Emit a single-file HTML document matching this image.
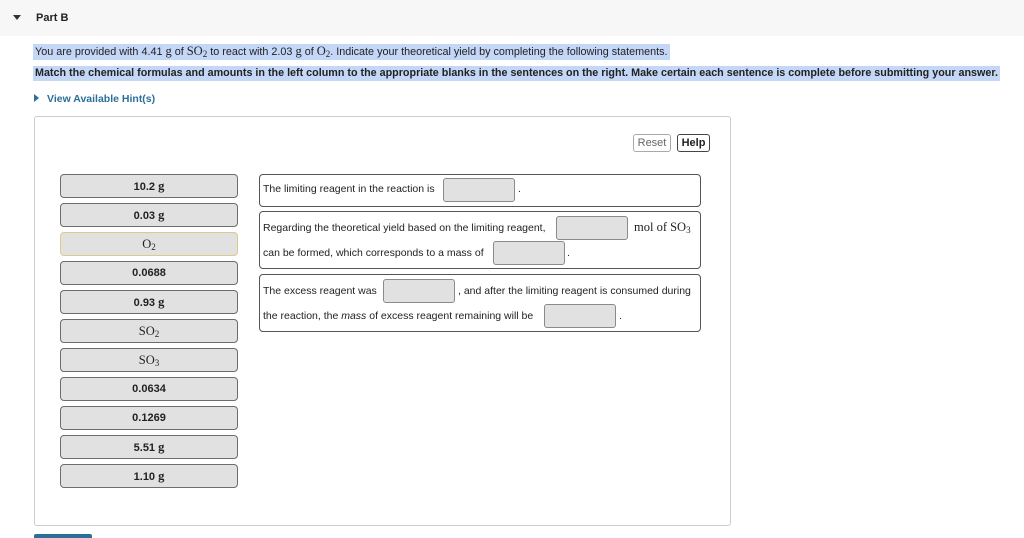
<!DOCTYPE html>
<html><head><meta charset="utf-8"><style>
body{margin:0;width:1024px;height:537px;overflow:hidden;background:#fff;font-family:"Liberation Sans",Arial,sans-serif;color:#222;position:relative}
.a{position:absolute}
.m{font-family:"Liberation Serif",serif;font-size:12.5px}
.hl{background:#c4d7f7}
.it{position:absolute;left:60px;width:176px;height:22px;border:1px solid #6d6d6d;border-radius:4px;background:#e1e1e1;font-size:11px;font-weight:bold;text-align:center;line-height:22px}
.bx{position:absolute;left:259px;width:440px;border:1.5px solid #555;border-radius:4px;background:#fff;font-size:10.5px}
.bl{position:absolute;width:70px;height:22px;border:1px solid #8a8a8a;border-radius:3px;background:#e1e1e1}
.t{position:absolute;white-space:nowrap;font-size:10.5px}
sub{font-size:9px;vertical-align:-2px;line-height:0}
</style></head><body>
<div class="a" style="left:0;top:0;width:1024px;height:36px;background:#f7f7f7"></div>
<div class="a" style="left:13px;top:15px;width:0;height:0;border-left:4px solid transparent;border-right:4px solid transparent;border-top:5px solid #333"></div>
<div class="a" style="left:36px;top:12px;font-size:11px;font-weight:bold">Part B</div>
<div class="a hl" style="left:33px;top:44px;font-size:10.8px;line-height:15px;padding:0 2px;white-space:nowrap">You are provided with 4.41 <span class="m">g</span> of <span class="m">SO<sub>2</sub></span> to react with 2.03 <span class="m">g</span> of <span class="m">O<sub>2</sub></span>. Indicate your theoretical yield by completing the following statements.</div>
<div class="a hl" style="left:33px;top:66px;font-size:10.75px;font-weight:bold;line-height:15px;padding:0 2px;white-space:nowrap">Match the chemical formulas and amounts in the left column to the appropriate blanks in the sentences on the right. Make certain each sentence is complete before submitting your answer.</div>
<div class="a" style="left:34px;top:94px;width:0;height:0;border-top:4px solid transparent;border-bottom:4px solid transparent;border-left:5px solid #2b6f99"></div>
<div class="a" style="left:47px;top:93px;font-size:10.5px;font-weight:bold;color:#2b6f99">View Available Hint(s)</div>
<div class="a" style="left:34px;top:116px;width:695px;height:408px;border:1px solid #ccc;border-radius:3px"></div>
<div class="a" style="left:633px;top:134px;width:36px;height:16px;border:1px solid #aaa;border-radius:3px;font-size:11px;color:#666;text-align:center;line-height:16px">Reset</div>
<div class="a" style="left:677px;top:134px;width:31px;height:16px;border:1px solid #444;border-radius:3px;font-size:11px;font-weight:bold;text-align:center;line-height:16px">Help</div>
<div class="it" style="top:174px">10.2 <span class="m">g</span></div>
<div class="it" style="top:203px">0.03 <span class="m">g</span></div>
<div class="it" style="top:232px;border-color:#e0c88a;font-weight:normal"><span class="m">O<sub>2</sub></span></div>
<div class="it" style="top:261px">0.0688</div>
<div class="it" style="top:290px">0.93 <span class="m">g</span></div>
<div class="it" style="top:319px;font-weight:normal"><span class="m">SO<sub>2</sub></span></div>
<div class="it" style="top:348px;font-weight:normal"><span class="m">SO<sub>3</sub></span></div>
<div class="it" style="top:377px">0.0634</div>
<div class="it" style="top:406px">0.1269</div>
<div class="it" style="top:435px">5.51 <span class="m">g</span></div>
<div class="it" style="top:464px">1.10 <span class="m">g</span></div>
<div class="bx" style="top:174px;height:31px"></div>
<div class="t" style="left:263px;top:183px">The limiting reagent in the reaction is</div>
<div class="bl" style="left:443px;top:178px"></div><div class="t" style="left:518px;top:183px">.</div>
<div class="bx" style="top:211px;height:56px"></div>
<div class="t" style="left:263px;top:222px">Regarding the theoretical yield based on the limiting reagent,</div>
<div class="bl" style="left:556px;top:216px"></div>
<div class="t" style="left:634px;top:220px;font-family:'Liberation Serif',serif;font-size:12.5px">mol of SO<sub>3</sub></div>
<div class="t" style="left:263px;top:247px">can be formed, which corresponds to a mass of</div>
<div class="bl" style="left:493px;top:241px"></div><div class="t" style="left:567px;top:247px">.</div>
<div class="bx" style="top:274px;height:56px"></div>
<div class="t" style="left:263px;top:285px">The excess reagent was</div>
<div class="bl" style="left:383px;top:279px"></div>
<div class="t" style="left:458px;top:285px">, and after the limiting reagent is consumed during</div>
<div class="t" style="left:263px;top:310px">the reaction, the <i>mass</i> of excess reagent remaining will be</div>
<div class="bl" style="left:544px;top:304px"></div><div class="t" style="left:619px;top:310px">.</div>
<div class="a" style="left:34px;top:534px;width:58px;height:4px;background:#2b6f99;border-radius:2px 2px 0 0"></div>
</body></html>
